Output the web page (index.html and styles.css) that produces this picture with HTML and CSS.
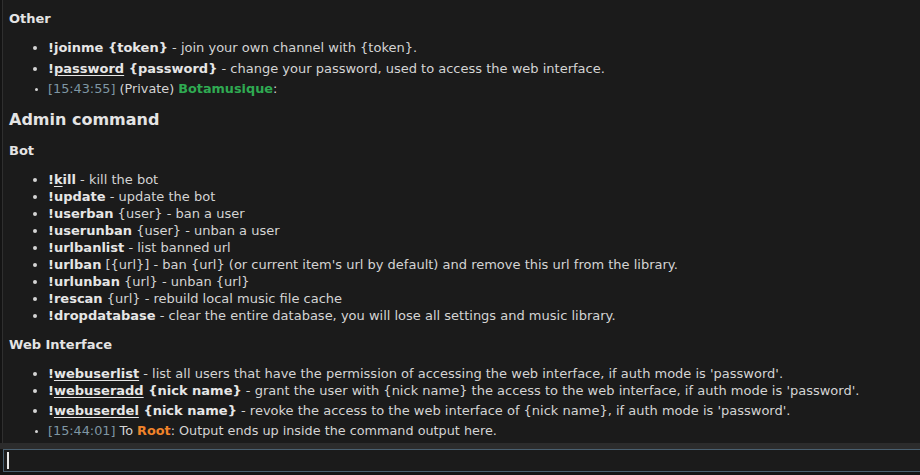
FILE: index.html
```html
<!DOCTYPE html>
<html>
<head>
<meta charset="utf-8">
<link rel="stylesheet" href="styles.css">
</head>
<body>
<div class="app">
  <div class="log">
    <h4 class="h4 first">Other</h4>
    <ul class="list other">
      <li class="gap4"><b>!joinme {token}</b> - join your own channel with {token}.</li>
      <li class="gap3"><b>!<u>password</u> {password}</b> - change your password, used to access the web interface.</li>
      <li class="ts"><span class="time">[15:43:55]</span> (Private) <b class="green">Botamusique</b>:</li>
    </ul>
    <h3 class="h3">Admin command</h3>
    <h4 class="h4">Bot</h4>
    <ul class="list">
      <li><b>!<u>k</u>ill</b> - kill the bot</li>
      <li><b>!update</b> - update the bot</li>
      <li><b>!userban</b> {user} - ban a user</li>
      <li><b>!userunban</b> {user} - unban a user</li>
      <li><b>!urlbanlist</b> - list banned url</li>
      <li><b>!urlban</b> [{url}] - ban {url} (or current item's url by default) and remove this url from the library.</li>
      <li><b>!urlunban</b> {url} - unban {url}</li>
      <li><b>!rescan</b> {url} - rebuild local music file cache</li>
      <li><b>!dropdatabase</b> - clear the entire database, you will lose all settings and music library.</li>
    </ul>
    <h4 class="h4">Web Interface</h4>
    <ul class="list">
      <li><b>!<u>webuserlist</u></b> - list all users that have the permission of accessing the web interface, if auth mode is 'password'.</li>
      <li class="gap3"><b>!<u>webuseradd</u> {nick name}</b> - grant the user with {nick name} the access to the web interface, if auth mode is 'password'.</li>
      <li class="gap3"><b>!<u>webuserdel</u> {nick name}</b> - revoke the access to the web interface of {nick name}, if auth mode is 'password'.</li>
      <li class="ts"><span class="time">[15:44:01]</span> To <b class="orange">Root</b>: Output ends up inside the command output here.</li>
    </ul>
  </div>
  <div class="sep"></div>
  <div class="input"><span class="caret"></span></div>
</div>
</body>
</html>
```
FILE: styles.css
```css
html, body {
  margin: 0;
  padding: 0;
  background: #2a2a2a;
  width: 920px;
  height: 475px;
  overflow: hidden;
}
body {
  font-family: "DejaVu Sans", sans-serif;
  font-size: 13px;
  color: #d4d4d4;
}
.app {
  display: flex;
  flex-direction: column;
  height: 475px;
  padding-left: 2px;
  background: #141414;
}
.log {
  height: 443px;
  box-sizing: border-box;
  background: #1b1b1b;
  border-left: 1px solid #2f2f2f;
  padding-left: 6px;
  overflow: hidden;
}
.h4 {
  font-size: 13px;
  font-weight: bold;
  line-height: 17px;
  margin: 12px 0 0 0;
  color: #e4e4e4;
}
.h4.first {
  margin-top: 10px;
}
.h3 {
  font-size: 16px;
  font-weight: bold;
  line-height: 21px;
  margin: 12px 0 0 0;
  color: #e4e4e4;
}
.list {
  margin: 12px 0 0 0;
  padding-left: 39px;
  line-height: 17px;
}
.list.other {
  margin-top: 12px;
}
.list li {
  margin: 0;
}
.list li.gap4 {
  margin-bottom: 4px;
}
.list li.gap3 {
  margin-bottom: 3px;
}
b {
  color: #e6e6e6;
}
u {
  text-decoration-thickness: 1px;
  text-underline-offset: 2px;
}
.list li.ts {
  font-size: 12.8px;
  margin-top: 0;
}
.ts::marker {
  font-size: 10px;
}
.time {
  color: #7f97a4;
}
.green {
  color: #2faa52;
}
.orange {
  color: #f0832a;
}
.sep {
  height: 6px;
  background: #2c2c2c;
  margin-left: -2px;
}
.input {
  height: 23px;
  box-sizing: border-box;
  border: 1px solid #4a6070;
  background: #1b1b1b;
  margin-left: 1px;
  margin-right: -4px;
  position: relative;
}
.caret {
  position: absolute;
  left: 3px;
  top: 2px;
  width: 2px;
  height: 17px;
  background: #e8e8e8;
}
```
